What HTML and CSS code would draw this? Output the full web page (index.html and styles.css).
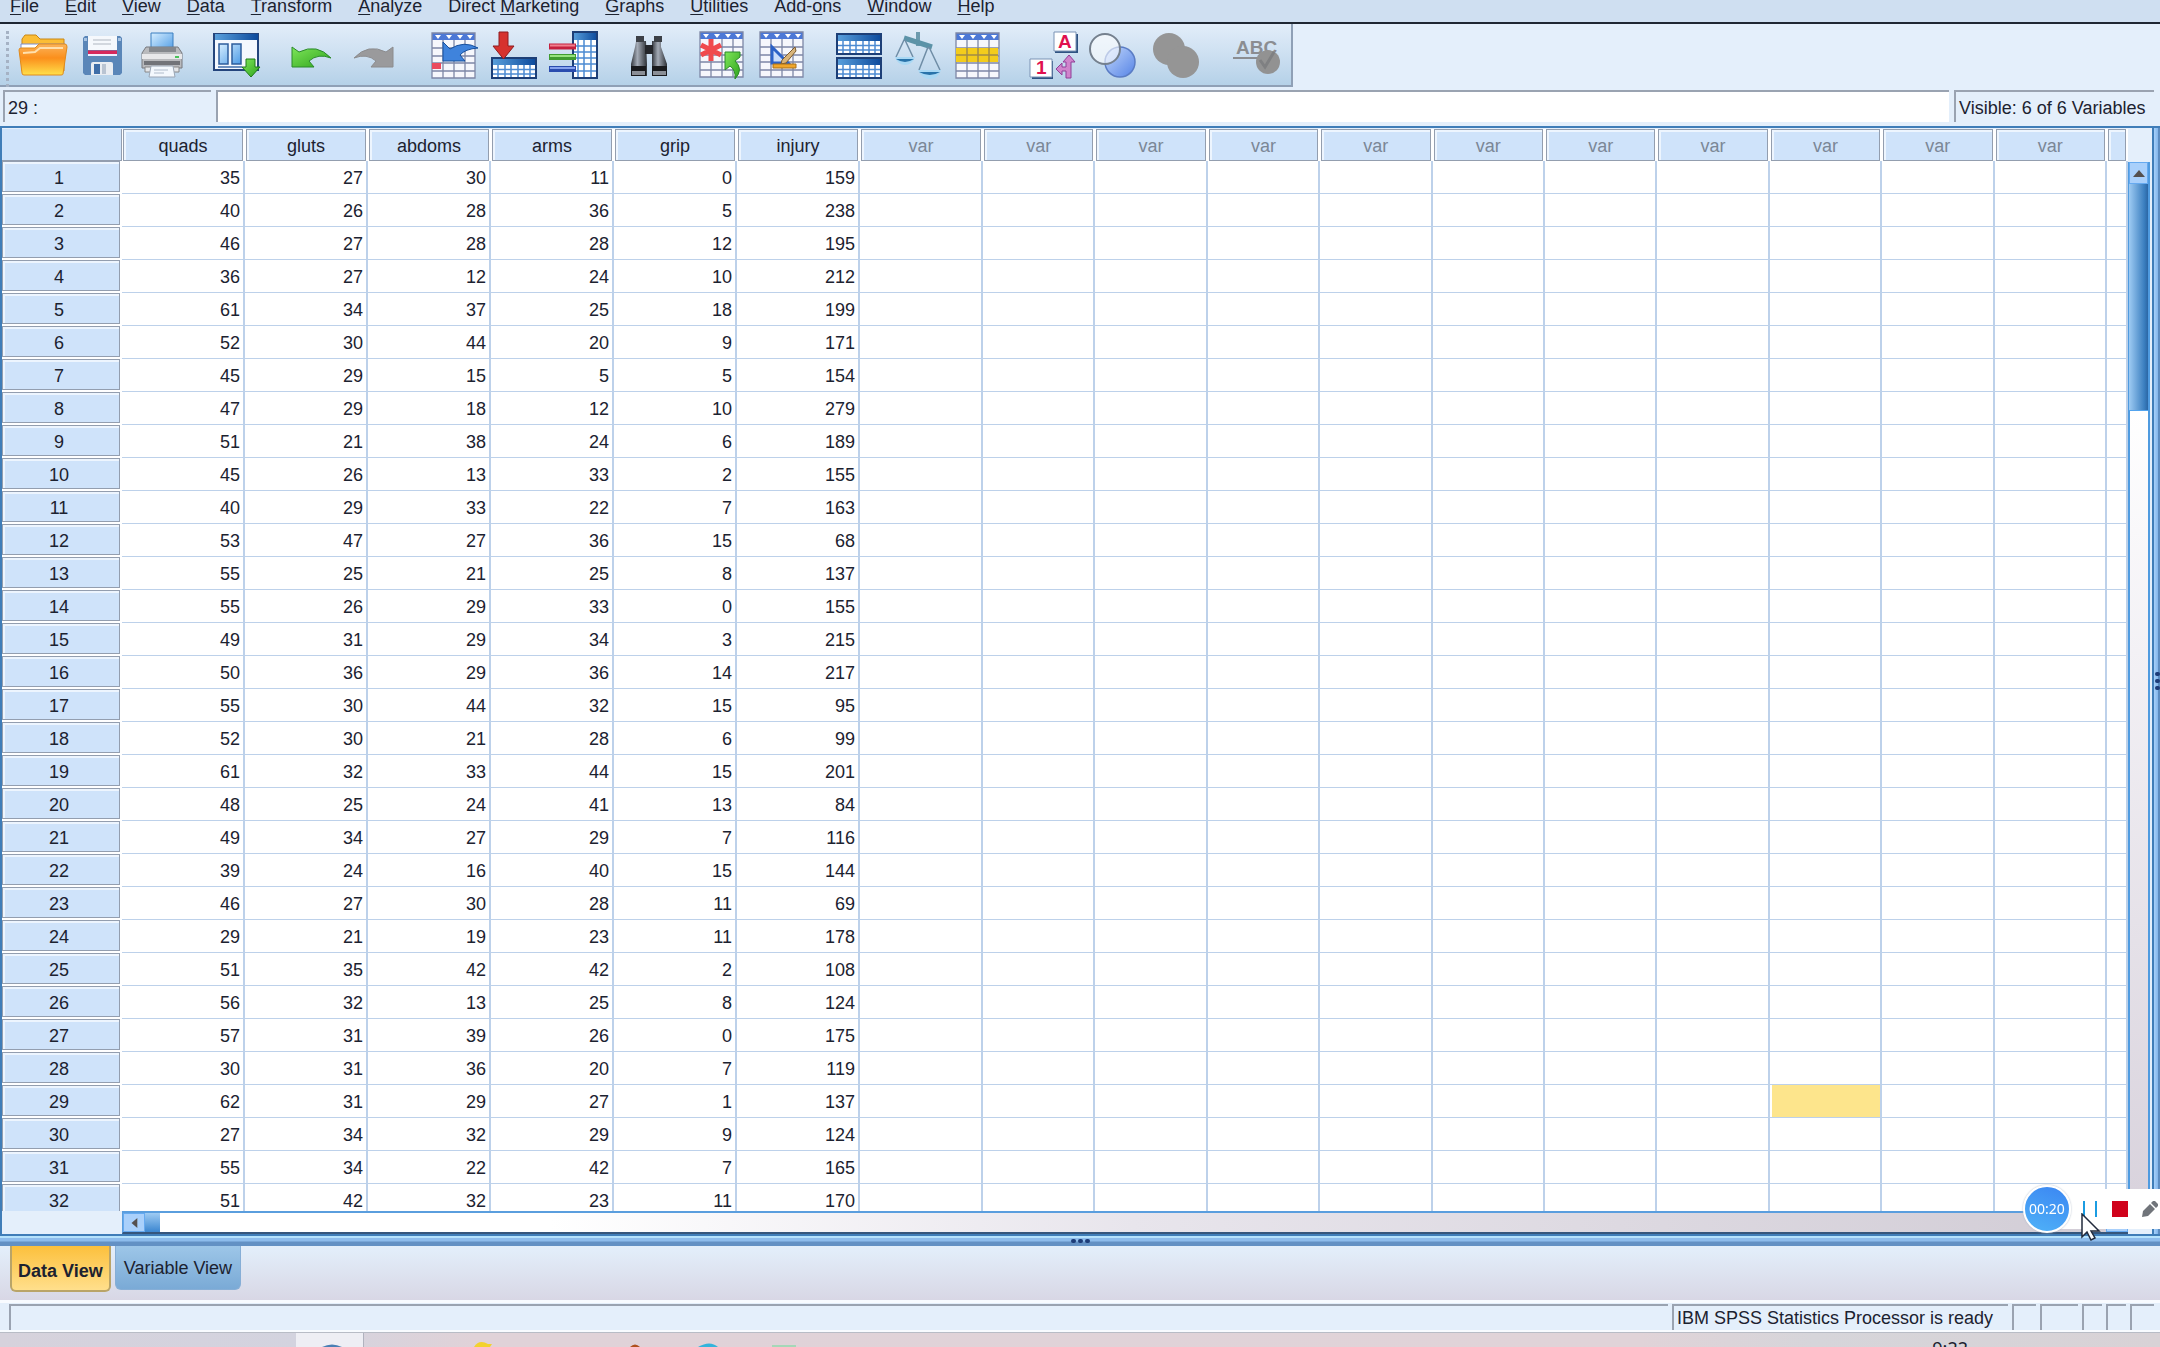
FILE: index.html
```html
<!DOCTYPE html>
<html lang="en">
<head>
<meta charset="utf-8">
<title>Data Editor</title>
<link rel="stylesheet" href="styles.css">
</head>
<body>
<svg class="defs" aria-hidden="true">
  <defs>
    <linearGradient id="blueBar" x1="0" y1="0" x2="1" y2="0"><stop offset="0" stop-color="#5aa0dc"/><stop offset="1" stop-color="#0c4a9c"/></linearGradient>
    <linearGradient id="folderFront" x1="0" y1="0" x2="0" y2="1"><stop offset="0" stop-color="#fbb45c"/><stop offset=".45" stop-color="#fb8f1c"/><stop offset="1" stop-color="#ffe04a"/></linearGradient>
    <linearGradient id="sky" x1="0" y1="0" x2="1" y2="1"><stop offset="0" stop-color="#d6eeff"/><stop offset="1" stop-color="#4d9be6"/></linearGradient>
    <linearGradient id="steel" x1="0" y1="0" x2="1" y2="0"><stop offset="0" stop-color="#33373e"/><stop offset=".4" stop-color="#a4abb6"/><stop offset="1" stop-color="#2c3036"/></linearGradient>
    <linearGradient id="green" x1="0" y1="0" x2="1" y2="1"><stop offset="0" stop-color="#7ee65a"/><stop offset="1" stop-color="#2fa31c"/></linearGradient>
    <linearGradient id="lens" x1="0" y1="0" x2="1" y2="1"><stop offset="0" stop-color="#c3d8fb"/><stop offset="1" stop-color="#5583e6"/></linearGradient>
    <symbol id="sheet" viewBox="0 0 45 47" overflow="visible">
      <path d="M1 1h43v45H1z" fill="#f6f7fc"/>
      <path d="M1 1h43v7H1z" fill="#4c78d6"/>
      <path d="M4 3h6l-3 4zM15 3h6l-3 4zM26 3h6l-3 4zM36 3h6l-3 4z" fill="#fff"/>
      <path d="M1 1h43v45H1zM12 8v38M23 8v38M34 8v38M1 16h43M1 24h43M1 31h43M1 39h43" fill="none" stroke="#7d87a6" stroke-width="1.3"/>
    </symbol>
    <symbol id="block" viewBox="0 0 46 22" overflow="visible">
      <path d="M1 1h44v20H1z" fill="#fff"/>
      <path d="M1 1h44v7H1z" fill="url(#blueBar)"/>
      <path d="M1 12.500h44M1 17h44M7 8v13M14 8v13M20 8v13M27 8v13M33 8v13M39 8v13" stroke="#4c8bd2" stroke-width="1.500"/>
      <path d="M1 1h44v20H1z" fill="none" stroke="#1d3f77" stroke-width="2"/>
    </symbol>
  </defs>
</svg>

<nav class="menubar">
  <a href="#"><u>F</u>ile</a><a href="#"><u>E</u>dit</a><a href="#"><u>V</u>iew</a><a href="#"><u>D</u>ata</a><a href="#"><u>T</u>ransform</a><a href="#"><u>A</u>nalyze</a><a href="#">Direct <u>M</u>arketing</a><a href="#"><u>G</u>raphs</a><a href="#"><u>U</u>tilities</a><a href="#">Add-<u>o</u>ns</a><a href="#"><u>W</u>indow</a><a href="#"><u>H</u>elp</a>
</nav>

<div class="toolbar">
  <div class="group">
    <button aria-label="Open"><svg viewBox="0 0 48 48"><path d="M3 40V8l3-4h11l4 4h24v32z" fill="#fbbd35" stroke="#c98716"/><path d="M2 13h44v12H2z" fill="#fff" stroke="#7c8fd0"/><path d="M0 19q0-2 2-2h14l4-4h26q2 0 2 3l-4 27q0 1-2 1H5q-2 0-2-2z" fill="url(#folderFront)" stroke="#e08a1c"/><path d="M4 22l12-1 5-4h23" fill="none" stroke="#ffe0ae" stroke-width="2"/></svg></button>
    <button aria-label="Save"><svg viewBox="0 0 48 48"><path d="M6 5h35l2 2v35l-2 2H6l-2-2V7z" fill="#5a86b8"/><path d="M9 5h29v14H9z" fill="#f5f8fc"/><path d="M14 9h18M14 13h18" stroke="#c6ccd4" stroke-width="1.500"/><path d="M9 19.500h29v3.500H9z" fill="#d6285c"/><path d="M9 23h29v2H9z" fill="#eef"/><path d="M14 31h18q2 0 2 2v11H12V33q0-2 2-2z" fill="#e9edf2"/><path d="M15 33h6v10h-6z" fill="#3f6ea8"/><path d="M25 33v10" stroke="#b9c4d2" stroke-width="4"/><path d="M5 7h3v3H5zM39 7h3v3h-3z" fill="#a5c2e2"/></svg></button>
    <button aria-label="Print"><svg viewBox="0 0 48 48"><path d="M12 2h22v18H12z" fill="url(#sky)" stroke="#3a7fc0"/><path d="M7 16h32l4 6v15H3V22z" fill="#b9babd" stroke="#77797e"/><path d="M10 16h27v5H10z" fill="#85888d"/><path d="M3 23h40v5H3z" fill="#e8e8ea"/><path d="M5 32h36" stroke="#727479" stroke-width="4"/><path d="M36 26h4" stroke="#4ac25a" stroke-width="2"/><path d="M6 36h34v5H6z" fill="#e4e6e9" stroke="#888"/><path d="M12 35h22l2 11H10z" fill="#f3f8fd" stroke="#9aa6b5"/><path d="M15 39h14M15 42h10" stroke="#b0bccb"/></svg></button>
  </div>
  <div class="group">
    <button aria-label="Recall dialogs"><svg viewBox="0 0 48 48"><path d="M-1 3h44v36H-1z" fill="#f4f8fe" stroke="#24457c" stroke-width="2"/><path d="M0 3h43v6H0z" fill="url(#blueBar)"/><path d="M4 13h9v20H4zM17 13h9v20h-9z" fill="url(#sky)" stroke="#2d5c9c" stroke-width="1.500"/><path d="M3 36h24" stroke="#6c8fbf" stroke-width="2"/><path d="M31 28h9v8h5l-9 10-9-10h4z" fill="url(#green)" stroke="#1f7a18"/></svg></button>
  </div>
  <div class="group">
    <button aria-label="Undo"><svg viewBox="0 0 48 48"><path d="M1 16l7 5q18-9 32 6-13-5-22 3l5 6H1z" fill="url(#green)" stroke="#2b8a2a"/></svg></button>
    <button aria-label="Redo"><svg viewBox="0 0 48 48"><path d="M42 16l-7 5Q17 12 3 27q13-5 22 3l-5 6h22z" fill="#9a9a9c" stroke="#8c8c8e"/></svg></button>
  </div>
  <div class="group">
    <button aria-label="Go to case"><svg viewBox="0 0 48 48"><use href="#sheet" x="4" y="1" width="45" height="47"/><path d="M5 32h9v6H5z" fill="#ea4a5e"/><path d="M16 11l7 7q14-9 28-1-13 1-18 7l5 6H16z" fill="#3f83dc" stroke="#17509e"/></svg></button>
    <button aria-label="Go to variable"><svg viewBox="0 0 48 48"><use href="#block" x="4" y="26" width="46" height="22"/><path d="M12 1h9v14h6L16.500 28 6 15h6z" fill="#d6322e" stroke="#8e1c20"/></svg></button>
    <button aria-label="Variables"><svg viewBox="0 0 48 48"><path d="M26 1h24v46H26z" fill="#fff"/><path d="M26 1h24v8H26z" fill="url(#blueBar)"/><path d="M31 9v38M37 9v38M44 9v38M26 15h24M26 21h24M26 27h24M26 33h24M26 40h24" stroke="#4c8bd2" stroke-width="1.500"/><path d="M26 1h24v46H26z" fill="none" stroke="#1d3f77" stroke-width="2"/><path d="M2 15.500h27" stroke="#c5203e" stroke-width="6"/><path d="M3 14.500h25" stroke="#f0808e" stroke-width="2"/><path d="M2 26h27" stroke="#3f9c30" stroke-width="6"/><path d="M3 25h25" stroke="#95e27e" stroke-width="2"/><path d="M2 38h27" stroke="#2a4cae" stroke-width="6"/><path d="M3 37h25" stroke="#86a2ee" stroke-width="2"/></svg></button>
  </div>
  <div class="group">
    <button aria-label="Find"><svg viewBox="0 0 48 48"><path d="M14 5h6v5h3l1 24v11H8V33l4-17z" fill="url(#steel)"/><path d="M31 5h7v11l6 17v12H29V10h2z" fill="url(#steel)"/><path d="M22 14h8v9h-8z" fill="#24262b"/><path d="M13 5h8v6h-8zM31 5h8v6h-8z" fill="#3c4046"/><path d="M8 35h15v10H8zM29 35h15v10H29z" fill="#191a1d"/><path d="M9 42h13M30 42h13" stroke="#8b8f96" stroke-width="4"/></svg></button>
  </div>
  <div class="group">
    <button aria-label="Insert cases"><svg viewBox="0 0 48 48"><use href="#sheet" y="0" width="45" height="47"/><path d="M12 8v22M2 14l20 10M22 14L2 24" stroke="#f04a4e" stroke-width="5"/><path d="M26 21h15v5l-5 4q9 8 0 18 1-9-5-13l-5 4z" fill="url(#green)" stroke="#2b8a2a"/></svg></button>
    <button aria-label="Insert variable"><svg viewBox="0 0 48 48"><use href="#sheet" y="0" width="45" height="47"/><path d="M13 16v16h16z" fill="#c9dcfa" stroke="#2c62c8" stroke-width="3"/><path d="M36 16l-13 13-1 4 5-1 10-12z" fill="#d8b47a" stroke="#7c5a2e"/><path d="M14 33h23v4H14z" fill="#f0a62a" stroke="#a8701a"/></svg></button>
  </div>
  <div class="group">
    <button aria-label="Split file"><svg viewBox="0 0 48 48"><use href="#block" x="1" y="2" width="46" height="22"/><use href="#block" x="1" y="26" width="46" height="22"/></svg></button>
    <button aria-label="Weight cases"><svg viewBox="0 0 48 48"><path d="M23 1v14" stroke="#6c9aae" stroke-width="4"/><path d="M9 7l28 9" stroke="#5c93a8" stroke-width="5"/><path d="M9 9L1 26M10 9l8 17M33 16l-9 23M34 16l11 23" stroke="#6f8da6" stroke-width="1.500"/><path d="M0 26h20q-3 8-10 8T0 26zM23 39h23q-3 9-11 9t-12-9z" fill="#a9d8f4"/><path d="M1 28h18q-9 6-18 0zM24 41h21q-10 6-21 0z" fill="#2873aa"/></svg></button>
    <button aria-label="Select cases"><svg viewBox="0 0 48 48"><use href="#sheet" y="1" width="45" height="47"/><path d="M1 17h42v14H1z" fill="#f3cc1c"/><path d="M12 17v14M23 17v14M34 17v14M1 24h42" stroke="#a08a48" stroke-width="1.500"/></svg></button>
  </div>
  <div class="group">
    <button aria-label="Value labels"><svg viewBox="0 0 48 48"><path d="M24 3h23v19H24z" fill="#2f5382"/><path d="M23 1h22v19H23z" fill="#fff" stroke="#7a93b5"/><path d="M1 30h21v18H1z" fill="#2f5382"/><path d="M-1 28h22v18H-1z" fill="#fff" stroke="#7a93b5"/><text class="glyph" x="27" y="17">A</text><text class="glyph" x="5" y="43">1</text><path d="M38 24l6 7h-4v16h-5v-7h-4v4l-6-6 6-6v4h4v-5h-3z" fill="#d083cc" stroke="#8f3f97"/></svg></button>
    <button aria-label="Use variable sets"><svg viewBox="0 0 48 48"><circle cx="29" cy="31" r="15" fill="url(#lens)" stroke="#5a7cc4" stroke-width="1.500"/><circle cx="14" cy="18" r="15" fill="#fff" fill-opacity=".6" stroke="#75808e" stroke-width="2"/></svg></button>
    <button aria-label="Show all variables"><svg viewBox="0 0 48 48"><circle cx="18" cy="18" r="16" fill="#959595"/><circle cx="32" cy="31" r="16" fill="#959595"/></svg></button>
  </div>
  <div class="group">
    <button aria-label="Spell check"><svg viewBox="0 0 48 48"><text class="abc" x="9" y="23">ABC</text><path d="M6 27h24" stroke="#8b8d91" stroke-width="2"/><circle cx="41" cy="31" r="12" fill="#929292"/><path d="M33 29l5 7 9-15" fill="none" stroke="#7f8082" stroke-width="3"/></svg></button>
  </div>
</div>

<div class="cellbar">
  <output class="sunk position" for="cell-value">29 :</output>
  <input class="sunk value" id="cell-value" type="text" aria-label="Cell value">
  <div class="sunk visible">Visible: 6 of 6 Variables</div>
</div>

<main class="frame">
  <div class="grid">
    <div class="sheet"><table>
      <colgroup id="cols"></colgroup>
      <thead><tr id="head"></tr></thead>
      <tbody id="rows"></tbody>
    </table></div>
    <div class="vscroll">
      <button class="arrow" aria-label="Scroll up"><svg viewBox="0 0 12 8"><path d="M0 8l6-7 6 7z" fill="#55504e"/></svg></button>
      <div class="vthumb"></div>
      <div class="vtrack"></div>
    </div>
    <div class="hscroll">
      <button class="arrow" aria-label="Scroll left"><svg viewBox="0 0 8 12"><path d="M8 0L1 6l7 6z" fill="#55504e"/></svg></button>
      <div class="hthumb"></div>
      <div class="htrack"></div>
      <button class="arrow" aria-label="Scroll right"></button>
    </div>
  </div>
  <div class="edge"><i></i><i></i><i></i></div>
</main>
<div class="splitter"><i></i><i></i><i></i></div>

<div class="tabs">
  <button class="tab active">Data View</button>
  <button class="tab">Variable View</button>
</div>

<footer class="status">
  <div class="sunk message"></div>
  <div class="sunk processor">IBM SPSS Statistics Processor is ready</div>
  <div class="sunk narrow"></div>
  <div class="sunk medium"></div>
  <div class="sunk small"></div>
  <div class="sunk small"></div>
  <div class="sunk narrow"></div>
</footer>

<div class="taskbar">
  <div class="task"><svg viewBox="0 0 68 14"><path d="M26 14q10-5 20 0z" fill="#4a7fb4"/></svg></div>
  <svg class="apps" viewBox="0 0 400 14"><path d="M110 14q5-8 14-3l4 0-2 3z" fill="#f3d22e"/><path d="M266 14q5-5 10 0z" fill="#b0501e"/><path d="M334 14q12-7 20 0z" fill="#34b4dc"/><path d="M408 12h24v2h-24z" fill="#a5d8b8"/></svg>
  <time>9:22</time>
</div>

<div class="recorder">
  <div class="timer">00:20</div>
  <button aria-label="Pause"><svg viewBox="0 0 16 16"><path d="M2 0v16M14 0v16" stroke="#1b9ce2" stroke-width="2"/></svg></button>
  <button aria-label="Stop"><svg viewBox="0 0 16 16"><path d="M0 0h16v16H0z" fill="#d0021b"/></svg></button>
  <button aria-label="Draw"><svg viewBox="0 0 16 16"><path d="M0 16l1-6 7-7 5 5-7 7zM9 2l2-2q1-1 2 0l3 3q1 1 0 2l-2 2z" fill="#70747a"/></svg></button>
  <svg class="pointer" viewBox="0 0 20 28"><path d="M1 1v23l5-5 4 8 4-2-4-7h8z" fill="#fff" stroke="#222b3d" stroke-width="1.500"/></svg>
</div>
<script src="grid.js"></script>
</body>
</html>
```
FILE: styles.css
```css
* { box-sizing: border-box; }

body {
  margin: 0;
  height: 100vh;
  overflow: hidden;
  display: flex;
  flex-direction: column;
  background: #e4effb;
  color: #1c2230;
  font: 18px/20px "Liberation Sans", Arial, sans-serif;
}

button {
  border: 0;
  padding: 0;
  margin: 0;
  background: none;
  color: inherit;
  font: inherit;
}

.defs { position: absolute; width: 0; height: 0; }

.menubar {
  flex: none;
  display: flex;
  gap: 26px;
  height: 24px;
  padding-left: 10px;
  line-height: 12px;
  background: #cfdff1;
  border-bottom: 2px solid #1f2733;
}
.menubar a { color: inherit; text-decoration: none; white-space: nowrap; }
.menubar u { text-underline-offset: 2px; text-decoration-thickness: 1px; }

.toolbar {
  flex: none;
  align-self: flex-start;
  display: flex;
  gap: 28px;
  height: 63px;
  padding: 7px 16px 0 6px;
  border: solid #8fa0b6;
  border-width: 0 2px 2px 0;
  background: linear-gradient(#e2edf9, #cfe1f2 45%, #b5d1e8);
}
.toolbar::before {
  content: "";
  flex: none;
  width: 4px;
  height: 56px;
  margin-right: -22px;
  border-left: 3px dotted #a5b2c4;
}
.group { display: flex; gap: 12px; }
.group button { width: 48px; height: 48px; }
.group svg { display: block; width: 48px; height: 48px; overflow: visible; }
.glyph { font: bold 19px "Liberation Sans", Arial, sans-serif; fill: #e0104e; }
.abc { font: bold 19px "Liberation Sans", Arial, sans-serif; fill: #8b8d91; }

.sunk {
  border: solid #9aa3b1;
  border-width: 2px 0 0 2px;
  background: #e4effb;
  white-space: nowrap;
}

.cellbar {
  flex: none;
  display: flex;
  gap: 5px;
  height: 39px;
  padding: 3px 6px 4px 3px;
}
.position { width: 208px; padding: 6px 3px; }
.value { flex: 1; min-width: 0; padding: 0 4px; background: #fff; font: inherit; outline: 0; border-radius: 0; }
.visible { width: 200px; padding: 6px 3px; }

.frame {
  flex: 1;
  min-height: 0;
  display: flex;
  border: solid #3f7db8;
  border-width: 2px 0 2px 2px;
}
.grid {
  flex: 1;
  min-width: 0;
  display: grid;
  grid-template: minmax(0, 1fr) 23px / 120px minmax(0, 1fr) 24px;
  padding-top: 1px;
  background: #e4effb;
}
.sheet { grid-column: 1 / 3; overflow: hidden; background: #fff; }

table { width: 100%; table-layout: fixed; border-collapse: separate; border-spacing: 0; }
.col-head { width: 120px; }
.col-data { width: 123px; }
.col-rest { width: 21px; }

th, td { height: 33px; padding: 1px 0 0; font-weight: normal; }
th {
  background: #cfe3fa;
  border: solid #fff;
  border-width: 0 2px 2px 0;
  box-shadow: inset 1px 1px #939eaf, inset -1px -1px #939eaf, inset 3px 3px #edf5fe;
}
thead th { height: 32px; padding-top: 2px; border-width: 0 2px 0 1px; }
thead th:first-child { box-shadow: inset -1px -1px #939eaf; border-width: 0; }
thead th.unused { color: #7b8796; }
tbody th { padding-top: 2px; padding-right: 4px; }
td {
  padding-right: 3px;
  text-align: right;
  border: solid #bdd1ea;
  border-width: 0 2px 1px 0;
}
td.selected { background: #fde58c; box-shadow: inset 2px 0 #fff; }

.arrow {
  flex: none;
  width: 22px;
  height: 22px;
  display: grid;
  place-items: center;
  background: #a9d0fb;
  border: 1px solid #66aaf0;
}
.arrow svg { width: 12px; height: 10px; }

.vscroll { display: flex; flex-direction: column; margin-top: 33px; margin-right: 2px; border: solid #4f9be0; border-width: 0 2px 0 1px; }
.vscroll .arrow { width: 100%; }
.vthumb { height: 227px; background: linear-gradient(90deg, #9ecbf3, #3b7fc0 80%, #2b66a4); border-bottom: 1px solid #53a4ee; }
.vtrack { flex: 1; border-left: 1px solid #4f9be0; background: linear-gradient(#fff, #f3f1f5 30%, #d8d2dc); }

.hscroll {
  grid-column: 2;
  display: flex;
  border: solid #5a9ede;
  border-width: 2px 0 2px 1px;
  border-bottom-color: #35567c;
}
.hscroll .arrow { height: 19px; }
.hthumb { width: 15px; background: linear-gradient(#9ecbf3, #3b86d0); }
.htrack { flex: 1; background: linear-gradient(90deg, #fff 20%, #e8e5ec 50%, #d2cdd6); }

.edge {
  flex: none;
  width: 8px;
  display: flex;
  flex-direction: column;
  justify-content: center;
  align-items: flex-end;
  gap: 3px;
  background: linear-gradient(90deg, #3f7db8 2px, #a6d0fa 2px, #83b5ea 6px, #5d8cc0 6px);
}
.edge i, .splitter i { width: 5px; height: 4px; border-radius: 2px; background: #1d3c78; }

.splitter {
  flex: none;
  display: flex;
  justify-content: center;
  align-items: center;
  gap: 2px;
  height: 10px;
  background: linear-gradient(#b5e2fc 2px, #8dbcec 2px, #8dbcec 5px, #6391c4 6px);
}

.tabs {
  flex: none;
  display: flex;
  align-items: flex-start;
  gap: 4px;
  height: 54px;
  padding-left: 10px;
  background: linear-gradient(#e3effb, #d8d7e5);
}
.tab {
  height: 44px;
  padding: 0 8px;
  border: solid #86aed6;
  border-width: 0 1px 1px;
  border-radius: 0 0 6px 6px;
  background: linear-gradient(#9dc6e8, #7aaad6);
}
.tab.active {
  height: 46px;
  padding: 5px 6px 0;
  font-weight: bold;
  border: 2px solid #b9a468;
  border-top-width: 0;
  background: linear-gradient(#fcc03c, #ffdf8c);
}

.status {
  flex: none;
  display: flex;
  gap: 4px;
  height: 32px;
  padding: 1px 6px 0 9px;
  border: solid #f8fbff;
  border-width: 3px 0 2px;
}
.message { flex: 1; }
.processor { width: 336px; padding: 2px 3px; }
.small { width: 20px; }
.narrow { width: 24px; }
.medium { width: 38px; }

.taskbar {
  flex: none;
  position: relative;
  display: flex;
  height: 15px;
  padding-left: 296px;
  border-top: 1px solid #b8bcc6;
  background: linear-gradient(90deg, #d6d2dc, #d3d3df 14%, #e0d2d8 22%, #e0d3d8 76%, #d6d5da 84%, #d8d2d6);
  overflow: hidden;
}
.task { width: 68px; background: #eeeef4; border-right: 1px solid #b0b2be; }
.task svg, .apps { display: block; height: 14px; overflow: visible; }
.task svg { width: 68px; }
.apps { width: 400px; }
.taskbar time { margin-left: auto; padding: 3px 192px 0 0; font: 18px/24px "Noto Sans", sans-serif; }

.recorder {
  position: fixed;
  right: 0;
  bottom: 118px;
  display: flex;
  align-items: center;
  height: 40px;
  width: 112px;
  gap: 11px;
  background: #fff;
}
.recorder button { flex: none; width: 16px; height: 16px; }
.recorder button svg { display: block; width: 16px; height: 16px; }
.recorder button + button { margin-left: 3px; }
.timer {
  flex: none;
  width: 48px;
  height: 48px;
  margin-left: -25px;
  border: 2px solid #fff;
  border-radius: 50%;
  background: linear-gradient(20deg, #4fb2f8, #3b86f2);
  color: #fff;
  text-align: center;
  font: 14px/44px "Noto Sans", sans-serif;
  box-shadow: 0 0 2px #a8b4c4;
}
.pointer { position: absolute; left: 33px; top: 24px; width: 20px; height: 28px; }
```
FILE: grid.js
```js
const names = ["quads", "gluts", "abdoms", "arms", "grip", "injury"];
const unused = 12;
const selected = { row: 29, column: 15 };
const data = [
  [35,27,30,11,0,159],[40,26,28,36,5,238],[46,27,28,28,12,195],[36,27,12,24,10,212],
  [61,34,37,25,18,199],[52,30,44,20,9,171],[45,29,15,5,5,154],[47,29,18,12,10,279],
  [51,21,38,24,6,189],[45,26,13,33,2,155],[40,29,33,22,7,163],[53,47,27,36,15,68],
  [55,25,21,25,8,137],[55,26,29,33,0,155],[49,31,29,34,3,215],[50,36,29,36,14,217],
  [55,30,44,32,15,95],[52,30,21,28,6,99],[61,32,33,44,15,201],[48,25,24,41,13,84],
  [49,34,27,29,7,116],[39,24,16,40,15,144],[46,27,30,28,11,69],[29,21,19,23,11,178],
  [51,35,42,42,2,108],[56,32,13,25,8,124],[57,31,39,26,0,175],[30,31,36,20,7,119],
  [62,31,29,27,1,137],[27,34,32,29,9,124],[55,34,22,42,7,165],[51,42,32,23,11,170]
];

// The first unused column is as wide as the named ones; the rest share the room left.
document.getElementById("cols").innerHTML =
  '<col class="col-head">' + '<col class="col-data">'.repeat(names.length + 1) +
  "<col>".repeat(unused - 2) + '<col class="col-rest">';

document.getElementById("head").innerHTML = "<th></th>" +
  names.map(n => `<th scope="col">${n}</th>`).join("") +
  Array.from({ length: unused }, (_, i) => `<th class="unused">${i < unused - 1 ? "var" : ""}</th>`).join("");

document.getElementById("rows").innerHTML = data.map((values, r) => {
  let cells = `<th scope="row">${r + 1}</th>`;
  for (let c = 1; c <= names.length + unused; c++) {
    const mark = r + 1 === selected.row && c === selected.column ? ' class="selected"' : "";
    cells += `<td${mark}>${values[c - 1] ?? ""}</td>`;
  }
  return `<tr>${cells}</tr>`;
}).join("");
```
